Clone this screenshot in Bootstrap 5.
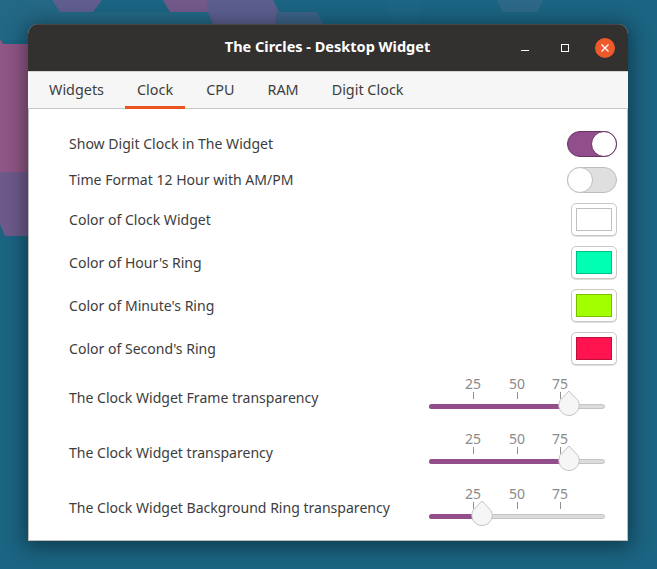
<!DOCTYPE html>
<html lang="en">
<head>
<meta charset="utf-8">
<title>The Circles - Desktop Widget</title>
<link href="https://cdn.jsdelivr.net/npm/bootstrap@5.3.0/dist/css/bootstrap.min.css" rel="stylesheet">
<style>
html,body{height:100%}
body{background:#1b6482;font-family:"Noto Sans","Open Sans",sans-serif;font-size:14px;color:#3d3d3d;overflow:hidden;padding:24px 29px 28px 28px;position:relative}
.wallpaper{position:absolute;inset:0;width:657px;height:569px}
.appwin{position:relative;width:600px;height:517px;border-radius:10px 10px 0 0;background:#fff;box-shadow:0 3px 20px 3px rgba(0,0,0,.42);overflow:hidden}
.titlebar{height:47px;background:#333130;color:#fff;font-weight:700;font-size:14.5px;position:relative;border-top:1px solid #48464a;padding-bottom:2px;margin-left:-1px;padding-right:0}
.winctl{position:absolute;right:13px;top:0;height:45px;gap:20px}
.ctlbox{width:20px;height:20px}
.tabstrip{height:38px;background:#f6f6f6;border-bottom:1px solid #c8c8c8;border-top:1px solid #d4d4d4;padding-left:9px}
.tabitem{padding:0 12px;margin-right:9px;height:37px;line-height:35px;font-size:14.4px;color:#3d3d3d}
.tabitem.on{border-bottom:3px solid #e95420}
.panel{padding:17px 10px 0 40px;border-left:1px solid #bdbdbd;border-right:1px solid #bdbdbd;border-bottom:1px solid #bdbdbd;height:432px}
.setline{font-size:14.05px}
.h36{height:36px}.h43{height:43px}.h55{height:55px}
.toggle{width:50px;height:26px;border-radius:13px;position:relative;border:1px solid #c0bebc;background:#dfdfdf}
.toggle::after{content:"";position:absolute;top:-1px;left:-1px;width:26px;height:26px;border-radius:50%;background:#fff;border:1px solid #bdbdbd}
.toggle.on{background:#924d8b;border-color:#66335f}
.toggle.on::after{left:auto;right:-1px;border-color:#66335f}
.swatchbtn{width:46px;height:33px;border:1px solid #cdc7c2;border-radius:5px;background:#fff;padding:4px;box-shadow:0 1px 0 #e0e0e0}
.swatchfill{display:block;width:100%;height:100%;border:1px solid rgba(0,0,0,.25)}
.slide{width:176px;height:55px;position:relative;margin-right:12px}
.trough{position:absolute;left:0;right:0;top:34px;height:5px;border-radius:3px;background:#dcdcdc;border:1px solid #c4c4c4}
.troughfill{position:absolute;left:0;top:34px;height:5px;border-radius:3px 0 0 3px;background:#924d8b}
.tick{position:absolute;top:22px;width:1px;height:7px;background:#919191}
.ticklbl{position:absolute;top:5px;width:30px;text-align:center;font-size:14px;line-height:18px;color:#8a8a8a}
.knob{position:absolute;top:20px;width:22px;height:26px}
</style>
</head>
<body>
<svg class="wallpaper" viewBox="0 0 657 569" aria-hidden="true">
<polygon points="0,0 52,0 60,12 163,12 208,12 213,24 0,24" fill="#2a6c88" opacity=".55"/>
<polygon points="0,24 60,24 60,40 0,40" fill="#256a87" opacity=".6"/>
<polygon points="52,0 102,0 93,12 60,12" fill="#5f5e8e"/>
<polygon points="163,0 210,0 213,24 213,24 208,12 170,12" fill="#72598a"/>
<polygon points="207,0 273,0 279,12 275,24 213,24 208,12" fill="#5c5f8e"/>
<polygon points="276,12 317,12 323,24 275,24" fill="#3f6288" opacity=".9"/>
<polygon points="497,0 543,0 538,12 502,12" fill="#2d6888"/>
<polygon points="383,0 420,0 420,24 395,24" fill="#1e6785" opacity=".6"/>
<polygon points="0,39 3,44 30,44 30,172 0,172" fill="#8f5686"/>
<polygon points="0,172 30,172 30,236 5,236 0,224" fill="#6d5a8b"/>
</svg>
<div class="appwin">
  <div class="titlebar d-flex align-items-center justify-content-center">
    <span>The Circles - Desktop Widget</span>
    <div class="winctl d-flex align-items-center">
      <svg class="ctlbox" viewBox="0 0 20 20"><rect x="6" y="12" width="8" height="1" fill="#fff"/></svg>
      <svg class="ctlbox" viewBox="0 0 20 20"><rect x="6.5" y="6.5" width="7" height="7" fill="none" stroke="#fff"/></svg>
      <svg class="ctlbox" viewBox="0 0 20 20"><circle cx="10" cy="10" r="10" fill="#f0592a"/><path d="M6.5 6.5l7 7M13.5 6.5l-7 7" stroke="#fff" stroke-width="1.3"/></svg>
    </div>
  </div>
  <div class="tabstrip d-flex">
    <div class="tabitem">Widgets</div>
    <div class="tabitem on">Clock</div>
    <div class="tabitem">CPU</div>
    <div class="tabitem">RAM</div>
    <div class="tabitem">Digit Clock</div>
  </div>
  <div class="panel d-flex flex-column">
    <div class="setline h36 d-flex align-items-center justify-content-between"><span>Show Digit Clock in The Widget</span><span class="toggle on"></span></div>
    <div class="setline h36 d-flex align-items-center justify-content-between"><span>Time Format 12 Hour with AM/PM</span><span class="toggle"></span></div>
    <div class="setline h43 d-flex align-items-center justify-content-between"><span>Color of Clock Widget</span><span class="swatchbtn"><span class="swatchfill" style="background:#ffffff"></span></span></div>
    <div class="setline h43 d-flex align-items-center justify-content-between"><span>Color of Hour's Ring</span><span class="swatchbtn"><span class="swatchfill" style="background:#00ffb3"></span></span></div>
    <div class="setline h43 d-flex align-items-center justify-content-between"><span>Color of Minute's Ring</span><span class="swatchbtn"><span class="swatchfill" style="background:#a2ff00"></span></span></div>
    <div class="setline h43 d-flex align-items-center justify-content-between"><span>Color of Second's Ring</span><span class="swatchbtn"><span class="swatchfill" style="background:#ff1450"></span></span></div>
    <div class="setline h55 d-flex align-items-center justify-content-between"><span>The Clock Widget Frame transparency</span>
      <div class="slide">
        <span class="ticklbl" style="left:29px">25</span><span class="ticklbl" style="left:73px">50</span><span class="ticklbl" style="left:116px">75</span>
        <span class="tick" style="left:44px"></span><span class="tick" style="left:88px"></span><span class="tick" style="left:131px"></span>
        <span class="trough"></span><span class="troughfill" style="width:140px"></span>
        <svg class="knob" style="left:129px" viewBox="0 0 22 26"><path d="M11 1 L20 10.5 A10.2 10.2 0 1 1 2 10.5 Z" fill="#f6f6f6" stroke="#c4c4c4"/></svg>
      </div></div>
    <div class="setline h55 d-flex align-items-center justify-content-between"><span>The Clock Widget transparency</span>
      <div class="slide">
        <span class="ticklbl" style="left:29px">25</span><span class="ticklbl" style="left:73px">50</span><span class="ticklbl" style="left:116px">75</span>
        <span class="tick" style="left:44px"></span><span class="tick" style="left:88px"></span><span class="tick" style="left:131px"></span>
        <span class="trough"></span><span class="troughfill" style="width:140px"></span>
        <svg class="knob" style="left:129px" viewBox="0 0 22 26"><path d="M11 1 L20 10.5 A10.2 10.2 0 1 1 2 10.5 Z" fill="#f6f6f6" stroke="#c4c4c4"/></svg>
      </div></div>
    <div class="setline h55 d-flex align-items-center justify-content-between"><span>The Clock Widget Background Ring transparency</span>
      <div class="slide">
        <span class="ticklbl" style="left:29px">25</span><span class="ticklbl" style="left:73px">50</span><span class="ticklbl" style="left:116px">75</span>
        <span class="tick" style="left:44px"></span><span class="tick" style="left:88px"></span><span class="tick" style="left:131px"></span>
        <span class="trough"></span><span class="troughfill" style="width:53px"></span>
        <svg class="knob" style="left:42px" viewBox="0 0 22 26"><path d="M11 1 L20 10.5 A10.2 10.2 0 1 1 2 10.5 Z" fill="#f6f6f6" stroke="#c4c4c4"/></svg>
      </div></div>
  </div>
</div>
<script src="https://cdn.jsdelivr.net/npm/bootstrap@5.3.0/dist/js/bootstrap.bundle.min.js"></script>
</body>
</html>
